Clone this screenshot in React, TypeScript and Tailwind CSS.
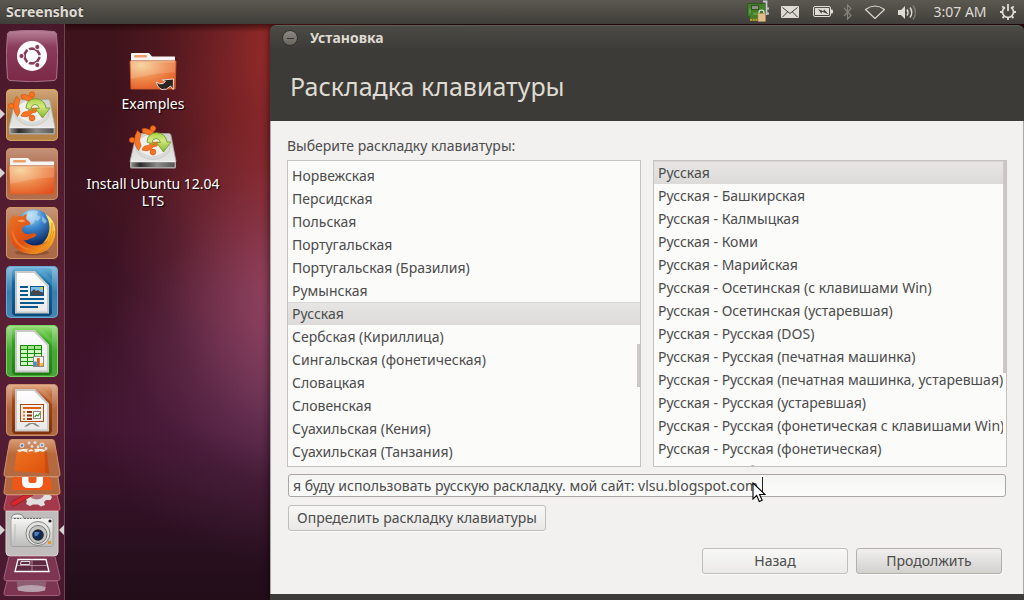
import React, { useState } from "react";
import type { ReactNode } from "react";

const FONT = "font-['Noto_Sans','Open_Sans',sans-serif]";

const layouts = [
  "Норвежская", "Персидская", "Польская", "Португальская", "Португальская (Бразилия)",
  "Румынская", "Русская", "Сербская (Кириллица)", "Сингальская (фонетическая)",
  "Словацкая", "Словенская", "Суахильская (Кения)", "Суахильская (Танзания)",
];

const variants = [
  "Русская", "Русская - Башкирская", "Русская - Калмыцкая", "Русская - Коми",
  "Русская - Марийская", "Русская - Осетинская (с клавишами Win)",
  "Русская - Осетинская (устаревшая)", "Русская - Русская (DOS)",
  "Русская - Русская (печатная машинка)", "Русская - Русская (печатная машинка, устаревшая)",
  "Русская - Русская (устаревшая)", "Русская - Русская (фонетическая с клавишами Win)",
  "Русская - Русская (фонетическая)", "Русская - Сербская (Русская)",
];

/* ---------- icons ---------- */

function FolderIcon({ link = false }: { link?: boolean }) {
  return (
    <svg viewBox="0 0 52 52" className="size-[52px]" aria-hidden="true">
      <defs>
        <radialGradient id="folderFront" cx="0.25" cy="0.15" r="1">
          <stop offset="0" stopColor="#f6cd92" />
          <stop offset="0.5" stopColor="#ee8a4c" />
          <stop offset="1" stopColor="#e2521f" />
        </radialGradient>
      </defs>
      <path d="M4 19V11q0-1 1-1h17l3 3.500h22.500q.5 0 .5.5v5z" fill="#f7f5f3" />
      <rect x="7" y="12" width="13" height="2.400" rx="1" fill="#eda06c" />
      <path d="M4 17h44v2H4z" fill="#cfc4bd" />
      <path d="M3 18h46l-.8 28H4z" fill="url(#folderFront)" stroke="#d4602c" strokeWidth="0.8" />
      <path d="M3.500 18.600h45l-.3 10.600Q28 30 4 36z" fill="#fff" opacity="0.16" />
      <path d="M4 18.800h44" stroke="#fbdcb4" strokeWidth="0.8" opacity="0.8" />
      {link && (
        <path
          d="M29.500 39q3 3 6.500 1.500l2.500-2-3-1.500 11-1-.3 10.500-2.700-3.500q-4 4.500-8.500 3.500-4.500-1.500-5.500-7.500z"
          fill="#2b2421" stroke="#f3ebe5" strokeWidth="0.9"
        />
      )}
    </svg>
  );
}

function InstallerIcon() {
  return (
    <svg viewBox="0 0 52 52" className="size-[52px]" aria-hidden="true">
      <defs>
        <linearGradient id="driveTop" x1="0" y1="0" x2="0" y2="1">
          <stop offset="0" stopColor="#cfcfcd" />
          <stop offset="1" stopColor="#e6e6e5" />
        </linearGradient>
        <linearGradient id="driveFront" x1="0" y1="0" x2="1" y2="0">
          <stop offset="0" stopColor="#8b8b89" />
          <stop offset="0.2" stopColor="#2a2a2a" />
          <stop offset="0.6" stopColor="#8c8c8a" />
          <stop offset="1" stopColor="#555" />
        </linearGradient>
        <linearGradient id="greenArrow" x1="0" y1="0" x2="0" y2="1">
          <stop offset="0" stopColor="#a9cf46" />
          <stop offset="0.4" stopColor="#d3ea82" />
          <stop offset="1" stopColor="#86b52c" />
        </linearGradient>
      </defs>
      <path d="M11 10.500h31q1.500 0 2 2l5 26H3l6-26q.5-2 2-2z" fill="url(#driveTop)" stroke="#a8a8a6" strokeWidth="0.8" />
      <ellipse cx="26" cy="24" rx="17" ry="12.500" fill="#dadad9" stroke="#c6c6c4" strokeWidth="0.8" />
      <ellipse cx="26" cy="22" rx="15" ry="10.500" fill="#efefee" />
      <path d="M3 38h46v6q0 1.500-1.500 1.500h-43Q3 45.500 3 44z" fill="#a9a9a7" />
      <rect x="4.500" y="39.500" width="43" height="4.500" fill="url(#driveFront)" />
      <path d="M3.500 38.400h45" stroke="#fff" strokeWidth="0.9" />
      <g fill="#f77522" stroke="#d2540f" strokeWidth="0.7" strokeLinejoin="round">
        <path d="M10.500 7.500l3.500 3.500q-3 5.500 0 12l-2.500 4.500q-7.500-9-1-20z" />
        <path d="M15 6q4-1.500 8 1l4.500.5-2.500 4-3.500.5q-3-2.500-5.500-2z" />
        <path d="M15 27q1-3.500 3-4 4 .5 6-3.500l7.500-.5-1.500 4-4 1q-4 5.500-11 3z" />
        <circle cx="5" cy="17" r="2.600" />
        <circle cx="26" cy="5.500" r="2.700" />
        <circle cx="26" cy="29" r="2.900" />
      </g>
      <path d="M20 19q.5-9 9.500-9.300 9 .3 10.500 9.300h4L36.500 29 29.500 19.500h4q-1-4-4.500-4t-4 4l2.500 2.500z"
        fill="url(#greenArrow)" stroke="#6f9c22" strokeWidth="0.9" strokeLinejoin="round" />
    </svg>
  );
}

function DashIcon() {
  return (
    <svg viewBox="0 0 52 52" className="size-[52px]" aria-hidden="true">
      <defs>
        <linearGradient id="dashBg" x1="0" y1="0" x2="0" y2="1">
          <stop offset="0" stopColor="#b98399" />
          <stop offset="0.32" stopColor="#8a3c5c" />
          <stop offset="1" stopColor="#7b2945" />
        </linearGradient>
      </defs>
      <path d="M4 1.500Q26-1 48 1.500q2 .5 2.500 2.500Q53 26 50.500 48q-.5 2-2.500 2.500Q26 53 4 50.500 2 50 1.500 48-1 26 1.500 4 2 2 4 1.500z"
        fill="url(#dashBg)" stroke="#a9728a" />
      <circle cx="26" cy="26" r="15" fill="#fff" />
      <circle cx="26" cy="26" r="7.400" fill="none" stroke="#8a3c5a" strokeWidth="2.800" />
      <g stroke="#fff" strokeWidth="1.600">
        <path d="M26 26l-5.500 9.500M26 26l-5.500-9.500M26 26h11" />
      </g>
      <circle cx="26" cy="26" r="6" fill="#fff" />
      <g fill="#8a3c5a" stroke="#fff" strokeWidth="1">
        <circle cx="15.500" cy="26" r="2.600" />
        <circle cx="31.300" cy="17" r="2.600" />
        <circle cx="31.300" cy="35" r="2.600" />
      </g>
    </svg>
  );
}

function FirefoxIcon() {
  return (
    <svg viewBox="0 0 52 52" className="size-[52px]" aria-hidden="true">
      <defs>
        <radialGradient id="globe" cx="0.4" cy="0.15" r="0.85">
          <stop offset="0" stopColor="#b5e0f7" />
          <stop offset="0.45" stopColor="#3b86cc" />
          <stop offset="1" stopColor="#0a2460" />
        </radialGradient>
        <linearGradient id="fox" x1="0" y1="0" x2="1" y2="1">
          <stop offset="0" stopColor="#ec7424" />
          <stop offset="0.5" stopColor="#dd4e12" />
          <stop offset="0.78" stopColor="#f08a1c" />
          <stop offset="1" stopColor="#fbd23c" />
        </linearGradient>
        <linearGradient id="flame" x1="0" y1="0" x2="0" y2="1">
          <stop offset="0" stopColor="#fff08a" />
          <stop offset="0.5" stopColor="#f9c22c" />
          <stop offset="1" stopColor="#ea7a18" />
        </linearGradient>
      </defs>
      <ellipse cx="26" cy="45.500" rx="17" ry="3" fill="#5a2a12" opacity="0.35" />
      <circle cx="28" cy="20.500" r="18" fill="url(#globe)" />
      <path d="M22 5q6-2 10-1l-1 4 4 2-3 4-3-1-1 3-3 2-2-4-4-2zM36 9l5 5-2 3-3-3z" fill="#cdeafa" opacity="0.5" />
      <path d="M4.500 12q2-1.500 2.500-4.500L9.500 10q4-1.500 7-.5 1-2 4.500-2.500-1.500 3-.5 5.500 3 2 4 4.500-2 1.200-6 1.700-2.500 1.300-2.500 3.800 0 2.500 3 4 3 1.500 6 .2 3-1 5.500.3-.5 3.500-6.500 4.500-3 2.500-6.500 1.500 6 7 16 5.500Q43 36.500 46 26l2.500-1Q50 35 42 42q-7 5.500-17 5Q11 46 5 35 .5 22 4.500 12z" fill="url(#fox)" />
      <path d="M39 6.500q9.500 6 10.300 16Q50 33 42 41q-5 4.500-11 5 10-5.500 11-13-2 2.500-5 3 6.500-7 6.500-16Q43 12 39 6.500z" fill="url(#flame)" />
      <path d="M46 16q1 8-3 17M48 24q-1 8-8 15" fill="none" stroke="#ee8a1c" strokeWidth="1" />
      <path d="M6 22q-.5 10 6 16 6 5.500 14 5-12-3.500-16-11-2-4-4-10z" fill="#f9913a" opacity="0.55" />
      <path d="M11 14q4-2.500 7-1l1 1.500q-3 1.500-8-.5z" fill="#fbb06a" opacity="0.8" />
    </svg>
  );
}

function DocumentBase({ id, light, mid, dark, children }: { id: string; light: string; mid: string; dark: string; children: ReactNode }) {
  return (
    <svg viewBox="0 0 52 52" className="size-[52px]" aria-hidden="true">
      <defs>
        <linearGradient id={id} x1="0" y1="0" x2="0" y2="1">
          <stop offset="0" stopColor={light} />
          <stop offset="0.3" stopColor={mid} />
          <stop offset="1" stopColor={dark} />
        </linearGradient>
        <linearGradient id="paper" x1="0" y1="0" x2="0" y2="1">
          <stop offset="0" stopColor="#fff" />
          <stop offset="1" stopColor="#e9e9e9" />
        </linearGradient>
      </defs>
      <rect x="6" y="2" width="40" height="48" rx="4" fill={`url(#${id})`} />
      <path d="M29 2h5l12 12v6z" fill={light} opacity="0.35" />
      <path d="M10 6h18.500L42 20v26.500H10z" fill="url(#paper)" stroke="#c9c9c9" strokeWidth="2" />
      {children}
    </svg>
  );
}

function WriterIcon() {
  return (
    <DocumentBase id="writerBg" light="#6cb2da" mid="#0f6aa0" dark="#064a78">
      <g fill="#085a8c">
        <path d="M14 20h8v2h-8zM14 24h8v2h-8zM14 28h8v2h-8zM14 32h24v2H14zM14 36h24v2H14zM14 40h18v2H14z" />
        <rect x="24" y="20" width="14" height="10" />
      </g>
      <rect x="25" y="21" width="12" height="8" fill="#7cc0ea" />
      <path d="M25 29v-3l3-3 2 2 2-1 2 1.500 3 1V29z" fill="#474747" />
      <path d="M34 21h3v3q-2.500 0-3-3z" fill="#e7c23c" />
    </DocumentBase>
  );
}

function CalcIcon() {
  return (
    <DocumentBase id="calcBg" light="#8fdc6c" mid="#2ea51c" dark="#1f7d14">
      <rect x="14" y="20" width="22" height="21" fill="#178a0c" />
      <path d="M15 21h6v3h-6zM22 21h6v3h-6zM29 21h6v3h-6z" fill="#a2e48a" />
      <path d="M15 25h6v3h-6zM22 25h6v3h-6zM29 25h6v3h-6zM15 29h6v3h-6zM22 29h6v3h-6zM29 29h6v3h-6zM15 33h6v3h-6zM22 33h6v3h-6zM15 37h6v3h-6zM22 37h6v3h-6z" fill="#d4f6c6" />
      <rect x="27.500" y="31.500" width="10" height="10" fill="#f6f6f6" stroke="#8a8a8a" />
      <path d="M28 36.500h2.800V41H28z" fill="#2a94dc" />
      <path d="M31 33h2.800v8H31z" fill="#e0601c" />
      <path d="M34.200 38H37v3h-2.800z" fill="#eebb2c" />
    </DocumentBase>
  );
}

function ImpressIcon() {
  return (
    <DocumentBase id="impressBg" light="#e0a37c" mid="#a84a14" dark="#7e300a">
      <path d="M23 39h6l5 3.500h-3l-4-2.500h-2l-4 2.500h-3z" fill="#8a8a8a" />
      <rect x="14.500" y="20.500" width="23" height="17" fill="#fbf1ea" stroke="#b3480f" />
      <path d="M17 23h18v2H17z" fill="#d8611a" />
      <path d="M17 27h2v2h-2zM17 30.500h2v2h-2zM17 34h2v2h-2z" fill="#e4793a" />
      <path d="M21 27h5v2h-5zM21 30.500h5v2h-5zM21 34h5v2h-5z" fill="#8a3208" />
      <rect x="27.500" y="27.500" width="7" height="7" fill="#fff" stroke="#8a8a8a" />
      <path d="M28.500 33l2-2 1.500 1 2-3" stroke="#2f9c22" fill="none" strokeWidth="1.200" />
    </DocumentBase>
  );
}

function SoftwareCenterIcon() {
  return (
    <svg viewBox="0 0 64 38" className="block h-[38px] w-16" aria-hidden="true">
      <defs>
        <linearGradient id="softBg" x1="0" y1="0" x2="0" y2="1">
          <stop offset="0" stopColor="#d99a74" />
          <stop offset="0.4" stopColor="#b8693c" />
          <stop offset="1" stopColor="#b26a42" />
        </linearGradient>
        <linearGradient id="bag" x1="0" y1="0" x2="1" y2="1">
          <stop offset="0" stopColor="#ee7220" />
          <stop offset="1" stopColor="#dd500c" />
        </linearGradient>
      </defs>
      <path d="M12 .5h40q2 0 2.500 2l5.500 32q.5 3-2 3H6q-2.500 0-2-3l5.500-32q.5-2 2.500-2z" fill="url(#softBg)" stroke="#cd9168" />
      <path d="M17 12l-3 20 35 2.500L47 13z" fill="url(#bag)" />
      <path d="M44.500 13l2.500-.5 2 22-3.500-.3z" fill="#b9440c" opacity="0.6" />
      <path d="M17 11q10-2 15-1 8-1 14 1l-3 2-3-1-4 1.500-4-1.500-5 1.500-4-1.500-4 1z" fill="#f6efe8" />
      <path d="M28 14v-3q3-3 6 0v3" fill="none" stroke="#e87424" strokeWidth="1.400" />
      <g fill="#dcdcdc">
        <circle cx="22" cy="6.500" r="2.400" /><circle cx="29" cy="4" r="1.400" /><circle cx="35" cy="3.500" r="1.600" />
        <circle cx="42" cy="6" r="2.500" /><circle cx="32" cy="7.500" r="1.400" /><circle cx="38" cy="8" r="1.400" /><circle cx="46" cy="9.500" r="1.400" />
      </g>
      <circle cx="22" cy="6.500" r="1.200" fill="#56789a" />
      <circle cx="42" cy="6" r="1.200" fill="#88909a" />
    </svg>
  );
}

function UbuntuOneIcon() {
  return (
    <svg viewBox="0 0 64 18" className="block h-[18px] w-16" aria-hidden="true">
      <path d="M6 0h52l2 14.500q.5 3-2 3H6q-2.500 0-2-3z" fill="#b2683f" stroke="#cd9168" />
      <path d="M13 0h37l2.500 13H12z" fill="#ee5718" />
      <path d="M22 0v5q0 6 6 6h9q6 0 6-6V0h-6.500v4q0 2-2 2h-4q-2 0-2-2V0z" fill="#fff" />
    </svg>
  );
}

function SettingsIcon() {
  return (
    <svg viewBox="0 0 64 16" className="block h-4 w-16" aria-hidden="true">
      <path d="M7 0h50l3 12.500q.5 3-2 3H6q-2.500 0-2-3z" fill="#a23a4c" stroke="#c46a78" />
      <path d="M24 0h26l2 2-1.500 3H46l-2 2 1 3-4 1.500-3-2h-5l-3 1.500-4-2 1-2.500z" fill="#e2dfdf" />
      <path d="M29 0h15q-1 4-7.500 4.500Q31 4 29 0z" fill="#b5717b" />
      <path d="M24 0h9L16 10q-4 2-5-.500Q10 8 13 6z" fill="#d5282c" stroke="#8a1c20" strokeWidth="0.700" />
    </svg>
  );
}

function CameraIcon() {
  return (
    <svg viewBox="0 0 64 45" className="block h-[45px] w-16" aria-hidden="true">
      <defs>
        <linearGradient id="camBody" x1="0" y1="0" x2="0" y2="1">
          <stop offset="0" stopColor="#f7f7f6" />
          <stop offset="1" stopColor="#bcbcba" />
        </linearGradient>
      </defs>
      <path d="M6 0h52v41q0 4-4 4H10q-4 0-4-4z" fill="#c2bdbd" stroke="#d8d4d4" />
      <ellipse cx="17.500" cy="6.500" rx="6" ry="3.500" fill="#f4f4f4" stroke="#666" strokeWidth="0.800" />
      <rect x="11" y="7" width="42" height="28.500" rx="2" fill="url(#camBody)" stroke="#999" strokeWidth="0.800" />
      <path d="M14 7.500h7M24 7.500h18" stroke="#666" strokeWidth="1.200" strokeDasharray="2 1" />
      <path d="M15 13v20" stroke="#bbb" />
      <circle cx="38" cy="22.500" r="12" fill="#e2e2e1" stroke="#848484" />
      <circle cx="38" cy="23.500" r="9" fill="#c4c4c2" stroke="#777" />
      <circle cx="38" cy="24" r="5.800" fill="#222831" />
      <rect x="33.500" y="20.500" width="8" height="7" rx="2" fill="#0c2a5e" />
      <path d="M34.500 21h5q-1 4-5 4.500z" fill="#4a7dc4" />
      <circle cx="50" cy="10" r="1.600" fill="#222" />
      <path d="M48 30h3v3h-3z" fill="#e8962c" />
    </svg>
  );
}

function WorkspaceIcon() {
  return (
    <svg viewBox="0 0 64 25" className="block h-[25px] w-16" aria-hidden="true">
      <path d="M9 .5h46l5 21q.5 3-2 3H6q-2.500 0-2-3z" fill="#7d3552" stroke="#a0607a" />
      <path d="M18 3.500h28l3 12H15z" fill="#5e2a42" stroke="#fff" strokeWidth="1.300" />
      <path d="M32 3.500v12M17 9.500h30" stroke="#c79fb0" strokeWidth="0.800" />
      <path d="M21 5.500h9l-.3 3h-9.200z" fill="none" stroke="#eee" strokeWidth="0.900" />
    </svg>
  );
}

function TrashIcon() {
  return (
    <svg viewBox="0 0 64 15" className="block h-[15px] w-16" aria-hidden="true">
      <path d="M7 0h50l3 11.500q.5 3-2 3H6q-2.500 0-2-3z" fill="#7d3552" stroke="#a0607a" />
      <path d="M16.500 0h30l-1.500 9q-12 3.500-27 0z" fill="#8e5e72" />
      <path d="M17.200 6q14-4 28.500 0l-.7 3.500q-12 3-27 0z" fill="#b7a2ab" />
    </svg>
  );
}

const P = "#dfdbd2";

function HardwareIcon() {
  return (
    <svg viewBox="0 0 24 24" className="h-6 w-6" aria-hidden="true">
      <path d="M1.500 3.500h18V17l-1.500 1.500H3.500v-2h-2z" fill="#447d2a" stroke="#2c5a1a" />
      <path d="M3 8.500h2v5H3zM7 12.500h5v2.500H7z" fill="#5f9c3e" />
      <rect x="5.500" y="5.500" width="7" height="4" fill="#8f908c" stroke="#33521f" />
      <path d="M4 18.500h9V21H4z" fill="#a9a02a" />
      <path d="M6.500 18.500V21M9 18.500V21M11.500 18.500V21" stroke="#5b641c" strokeWidth="0.700" />
      <path d="M17 1.500h3.500V15M20.500 8.500H23M20.500 13.500H23" fill="none" stroke="#c4c6cc" strokeWidth="1.800" />
      <path d="M13 14v-1.500q0-2.500 2.500-2.500t2.500 2.500V14" fill="none" stroke="#e8e8e8" strokeWidth="1.200" />
      <rect x="12" y="13.500" width="7.500" height="8" rx="0.500" fill="#e3bd8e" stroke="#b98a50" strokeWidth="0.600" />
    </svg>
  );
}

function MailIcon() {
  return (
    <svg viewBox="0 0 24 24" className="h-6 w-6" aria-hidden="true">
      <rect x="3" y="6" width="18" height="12" rx="1" fill={P} />
      <path d="M4.500 7.500L12 13.500l7.500-6M4.500 17l5-5M19.500 17l-5-5" stroke="#3c3b37" fill="none" />
    </svg>
  );
}

function BatteryIcon() {
  return (
    <svg viewBox="0 0 24 24" className="h-6 w-6" aria-hidden="true">
      <rect x="3.500" y="6.500" width="17" height="10" rx="1.500" fill="none" stroke={P} />
      <rect x="5" y="8" width="14" height="7" fill={P} />
      <path d="M21 9.500h1q1 0 1 1v2q0 1-1 1h-1z" fill={P} />
      <path d="M8 9l5.500 2.300.5-2 4.500 5-6.500-2.500-.5 2z" fill="#45443f" />
    </svg>
  );
}

function BluetoothIcon() {
  return (
    <svg viewBox="0 0 12 24" className="h-6 w-3" aria-hidden="true">
      <path d="M2 8l7 7.500L5.500 19V5L9 8.500 2 16" fill="none" stroke="#85837b" strokeWidth="1.200" />
    </svg>
  );
}

function WifiIcon() {
  return (
    <svg viewBox="0 0 26 24" className="h-6 w-[26px]" aria-hidden="true">
      <path d="M3.500 9.500q9.500-7 19 0L13 18.500z" fill="none" stroke={P} strokeWidth="1.100" strokeLinejoin="round" />
    </svg>
  );
}

function SoundIcon() {
  return (
    <svg viewBox="0 0 26 24" className="h-6 w-[26px]" aria-hidden="true">
      <path d="M2 10h3l4-4v13l-4-4H2z" fill={P} />
      <path d="M11 9.500q2 3 0 6" fill="none" stroke={P} strokeWidth="1.500" />
      <path d="M14 7.500q3.500 5 0 10" fill="none" stroke={P} strokeWidth="1.500" />
      <path d="M17 5.500q5 7 0 14" fill="none" stroke="#7c7a72" strokeWidth="1.500" />
    </svg>
  );
}

function SessionIcon() {
  return (
    <svg viewBox="0 0 20 24" className="h-6 w-5" aria-hidden="true">
      <path d="M7 7.300a5.500 5.500 0 1 0 6 0" fill="none" stroke={P} strokeWidth="1.700" />
      <path d="M10 4v7" stroke={P} strokeWidth="1.800" />
      <path d="M4.500 12H2M18 12h-2.500M6.500 16l-2 2M13.500 16l2 2M10 17.500V20M4.300 6.300l2 2M15.700 6.300l-2 2" stroke={P} strokeWidth="1.800" />
    </svg>
  );
}

/* ---------- panel & launcher ---------- */

function TopPanel() {
  return (
    <header className="relative z-10 flex h-6 shrink-0 items-center justify-between bg-linear-to-b from-[#5b594f] to-[#3f3e3a] pr-1.5 pl-1.5 text-[#dfdbd2]">
      <span className="text-sm font-bold [text-shadow:0_-1px_0_#2c2b28]">Screenshot</span>
      <div className="flex items-center gap-2">
        <button aria-label="Драйверы"><HardwareIcon /></button>
        <button aria-label="Почта"><MailIcon /></button>
        <button aria-label="Батарея"><BatteryIcon /></button>
        <button aria-label="Bluetooth"><BluetoothIcon /></button>
        <button aria-label="Сеть"><WifiIcon /></button>
        <button aria-label="Звук"><SoundIcon /></button>
        <button className="w-[60px] text-sm whitespace-nowrap">3:07 AM</button>
        <button aria-label="Сеанс"><SessionIcon /></button>
      </div>
    </header>
  );
}

const tile = "relative mx-1.5 block size-[52px]";
const framed = "rounded-[5px] inset-ring";

function RunningMark() {
  return (
    <svg viewBox="0 0 5 10" className="absolute -left-1.5 top-5 h-2.5 w-[5px]" aria-hidden="true">
      <path d="M0 0l5 5-5 5z" fill="#d8d4d2" />
    </svg>
  );
}

function Launcher() {
  return (
    <nav aria-label="Launcher" className="flex w-[65px] shrink-0 flex-col border-r border-[#6d4452] bg-linear-to-b from-[#49172a] via-[#5a2036] to-[#48192f] pt-1.5">
      <div className="flex flex-col gap-[7px]">
        <button className={tile} aria-label="Dash"><DashIcon /></button>
        <button className={`${tile} ${framed} bg-linear-to-b from-[#d0a67a] via-[#b07a3e] to-[#b98449] inset-ring-[#d6a45c]`} aria-label="Install Ubuntu">
          <RunningMark /><InstallerIcon />
        </button>
        <button className={`${tile} ${framed} bg-linear-to-b from-[#c4937a] via-[#ab6745] to-[#b06f4e] inset-ring-[#cf8f68]`} aria-label="Files">
          <RunningMark /><FolderIcon />
        </button>
        <button className={`${tile} ${framed} bg-linear-to-b from-[#c8967a] via-[#b06e4a] to-[#a9694a] inset-ring-[#d19a64]`} aria-label="Firefox"><FirefoxIcon /></button>
        <button className={`${tile} ${framed} bg-linear-to-b from-[#8fc0de] via-[#3b7fae] to-[#4685b2] inset-ring-[#68a8d4]`} aria-label="Writer"><WriterIcon /></button>
        <button className={`${tile} ${framed} bg-linear-to-b from-[#a8e092] via-[#45a834] to-[#4ba03a] inset-ring-[#76d35e]`} aria-label="Calc"><CalcIcon /></button>
        <button className={`${tile} ${framed} bg-linear-to-b from-[#dcb196] via-[#b0663e] to-[#ad6a45] inset-ring-[#d08f66]`} aria-label="Impress"><ImpressIcon /></button>
      </div>
      <div className="mt-[3px] flex flex-col">
        <button aria-label="Software Center"><SoftwareCenterIcon /></button>
        <button aria-label="Ubuntu One"><UbuntuOneIcon /></button>
        <button aria-label="System Settings"><SettingsIcon /></button>
        <button aria-label="Screenshot" className="relative">
          <CameraIcon />
          <svg viewBox="0 0 64 10" className="absolute top-3.5 left-0 h-2.5 w-16" aria-hidden="true">
            <path d="M0 0l5 5-5 5zM64 0l-5 5 5 5z" fill="#d8d4d2" />
          </svg>
        </button>
        <button aria-label="Workspaces"><WorkspaceIcon /></button>
        <button aria-label="Trash"><TrashIcon /></button>
      </div>
    </nav>
  );
}

function DesktopIcon({ label, children }: { label: string; children: ReactNode }) {
  return (
    <a href="#" className="flex w-36 flex-col items-center text-center text-sm leading-[17px] text-white [text-shadow:1px_1px_1px_#000]">
      {children}
      <span>{label}</span>
    </a>
  );
}

/* ---------- installer window ---------- */

function ListBox({ label, items, selected, onSelect, className, thumb }: {
  label: string; items: string[]; selected: string; onSelect: (v: string) => void; className: string; thumb: string;
}) {
  return (
    <div className="relative h-[307px] min-w-0 flex-1 overflow-hidden border border-[#c6c3bf] bg-[#fbfbfa]">
      <ul role="listbox" aria-label={label} className={className}>
        {items.map((item) => (
          <li
            key={item}
            role="option"
            aria-selected={item === selected}
            onClick={() => onSelect(item)}
            className={
              "h-[23px] cursor-default overflow-hidden pl-1 text-sm leading-[23px] whitespace-nowrap " +
              (item === selected ? "bg-linear-to-b from-[#e7e6e5] to-[#dcdbd9] inset-shadow-[0_1px_0_#d8d6d4]" : "")
            }
          >
            {item}
          </li>
        ))}
      </ul>
      <span className={`absolute right-0 w-[3px] bg-[#cbc8c5] ${thumb}`} />
    </div>
  );
}

const buttonBase = "h-[26px] rounded-[3px] border text-sm leading-6 bg-linear-to-b shadow-[0_1px_0_#fafafa]";

function InstallerWindow() {
  const [layout, setLayout] = useState("Русская");
  const [variant, setVariant] = useState("Русская");
  const [text, setText] = useState("я буду использовать русскую раскладку. мой сайт: vlsu.blogspot.com");

  return (
    <section className="mt-px flex min-w-0 flex-1 flex-col overflow-hidden rounded-t-md bg-[#3c3b37] shadow-[0_0_8px_#000a]">
      <div className="flex h-[25px] shrink-0 items-center gap-3 rounded-t-md border-t border-[#605e57] bg-linear-to-b from-[#4b4a45] to-[#3c3b37] pl-3">
        <button aria-label="Свернуть" className="flex size-4 items-center justify-center rounded-full border border-[#33322e] bg-linear-to-b from-[#8b8981] to-[#67655e]">
          <span className="h-px w-[7px] bg-[#34332f]" />
        </button>
        <span className="text-sm font-bold text-[#dfdbd2]">Установка</span>
      </div>
      <div className="flex h-[71px] shrink-0 items-center pl-5">
        <h1 className="text-[25px] leading-8 text-[#dfdbd2]">Раскладка клавиатуры</h1>
      </div>

      <div className="flex flex-1 flex-col border-x border-[#aaa8a4] bg-[#f2f1f0] px-4 pt-[14px] pb-5 text-[#4c4c4c]">
        <p className="mb-[3px] text-sm leading-[22px]">Выберите раскладку клавиатуры:</p>
        <div className="flex gap-3">
          <ListBox label="Раскладка" items={layouts} selected={layout} onSelect={setLayout} className="pt-[3px]" thumb="top-[183px] h-[43px]" />
          <ListBox label="Вариант" items={variants} selected={variant} onSelect={setVariant} className="mr-[3px] overflow-hidden" thumb="top-0 h-[212px]" />
        </div>
        <div className="relative mx-px mt-[7px]">
          <input
            aria-label="Проверка раскладки"
            value={text}
            onChange={(e) => setText(e.target.value)}
            className="block h-[23px] w-full rounded-[3px] border border-[#aaa6a1] bg-linear-to-b from-[#f4f4f3] to-[#fcfcfb] pl-1 text-sm outline-none"
          />
          <span className="absolute top-[3px] left-[474px] h-[17px] w-px bg-[#222]" />
          <svg viewBox="0 0 14 21" className="pointer-events-none absolute top-2 left-[464px] h-[21px] w-3.5" aria-hidden="true">
            <path d="M1 1v16l3.700-3.500 2.600 6 2.900-1.300-2.700-5.700H13z" fill="#fff" stroke="#000" strokeWidth="1.100" />
          </svg>
        </div>
        <button className={`${buttonBase} mx-px mt-2 self-start border-[#c2beba] from-[#f8f8f7] to-[#e9e8e6] px-2`}>
          Определить раскладку клавиатуры
        </button>
        <div className="mt-auto flex justify-end gap-2 pr-[5px]">
          <button className={`${buttonBase} w-[146px] border-[#c2beba] from-[#f8f8f7] to-[#ebeae8]`}>Назад</button>
          <button className={`${buttonBase} w-[146px] border-[#b3afaa] from-[#f1f0ef] to-[#d3d1ce]`}>Продолжить</button>
        </div>
      </div>
      <div className="h-1.5 shrink-0 bg-[#3c3b37]" />
    </section>
  );
}

export default function App() {
  return (
    <div className={`flex min-h-screen flex-col overflow-hidden bg-[#2a1020] ${FONT}`}>
      <TopPanel />
      <main className="flex flex-1 bg-[linear-gradient(#1008,#1000_8px),radial-gradient(190px_260px_at_300px_20px,#b4332fe8,#b4332f80_35%,#b4332f28_70%,#b4332f00),radial-gradient(200px_190px_at_310px_270px,#a85070e8,#a8507090_35%,#a8507028_72%,#a8507000),radial-gradient(180px_160px_at_270px_160px,#82252690,#82252630_60%,#82252600),radial-gradient(220px_170px_at_300px_370px,#6b3a62b0,#6b3a6240_55%,#6b3a6200),linear-gradient(#3e131b,#3c1224_45%,#41132f_70%,#2a1020_90%,#220d19)]">
        <Launcher />
        <div className="flex w-[205px] shrink-0 flex-col items-start gap-[11px] pt-[19px] pl-4">
          <DesktopIcon label="Examples"><FolderIcon link /></DesktopIcon>
          <DesktopIcon label="Install Ubuntu 12.04 LTS"><InstallerIcon /></DesktopIcon>
        </div>
        <InstallerWindow />
      </main>
    </div>
  );
}
